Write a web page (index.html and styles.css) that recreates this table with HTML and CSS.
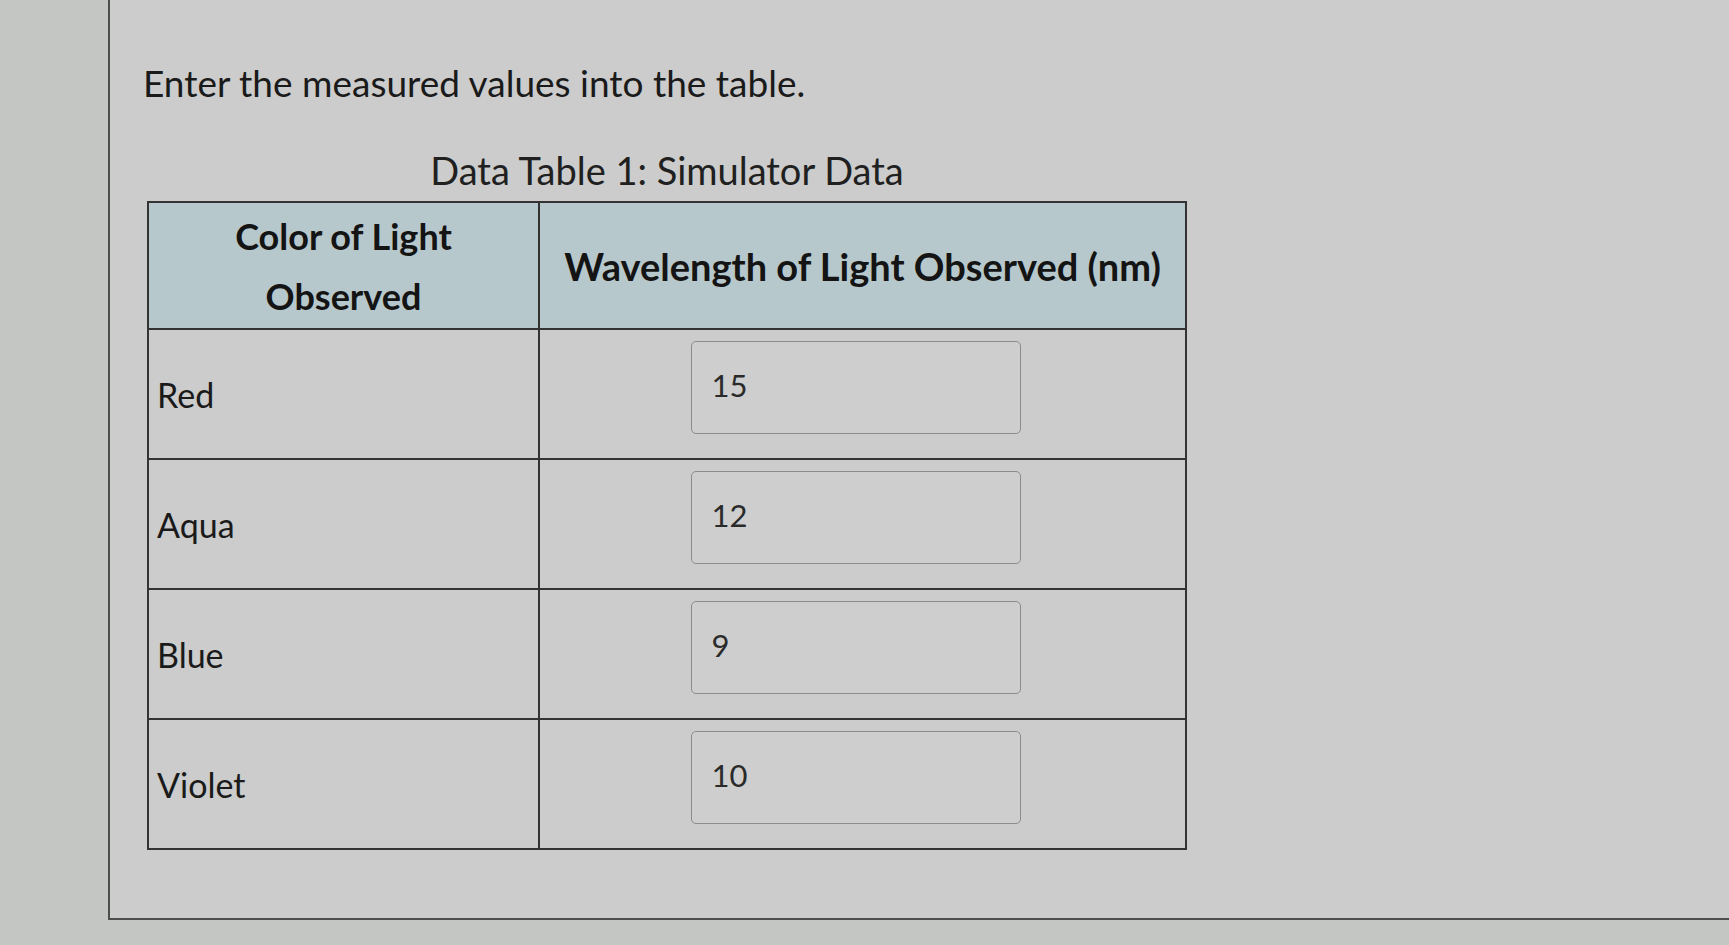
FILE: index.html
```html
<!DOCTYPE html>
<html lang="en">
<head>
<meta charset="utf-8">
<title>Data Table 1: Simulator Data</title>
<link rel="stylesheet" href="styles.css">
</head>
<body>
<div class="panel">
  <p class="intro">Enter the measured values into the table.</p>
  <table class="data-table">
    <caption>Data Table 1: Simulator Data</caption>
    <thead>
      <tr>
        <th class="col-color">Color of Light<br>Observed</th>
        <th class="col-wave">Wavelength of Light Observed (nm)</th>
      </tr>
    </thead>
    <tbody>
      <tr>
        <td class="name">Red</td>
        <td class="value"><input class="field" type="text" value="15"></td>
      </tr>
      <tr>
        <td class="name">Aqua</td>
        <td class="value"><input class="field" type="text" value="12"></td>
      </tr>
      <tr>
        <td class="name">Blue</td>
        <td class="value"><input class="field" type="text" value="9"></td>
      </tr>
      <tr>
        <td class="name">Violet</td>
        <td class="value"><input class="field" type="text" value="10"></td>
      </tr>
    </tbody>
  </table>
</div>
</body>
</html>
```
FILE: styles.css
```css
html, body {
  margin: 0;
  padding: 0;
}

body {
  background: #c4c6c3;
  font-family: Lato, "Open Sans", sans-serif;
  color: #1a1a1a;
  height: 945px;
  overflow: hidden;
}

.panel {
  margin-left: 108px;
  height: 920px;
  box-sizing: border-box;
  border-left: 2px solid #4d4d4d;
  border-bottom: 2px solid #4d4d4d;
  background: #cbcccb;
  padding: 61px 0 0 33px;
}

.intro {
  margin: 0;
  font-size: 37px;
  line-height: 44px;
  font-weight: 400;
}

.data-table {
  margin: 43px 0 0 4px;
  border-collapse: collapse;
  width: 1040px;
  table-layout: fixed;
}

.data-table caption {
  font-size: 38px;
  line-height: 44px;
  padding-bottom: 9px;
  color: #202020;
}

.data-table th,
.data-table td {
  border: 2px solid #333;
  padding: 0;
}

.data-table th {
  background: #b7c8cc;
  line-height: 60px;
  height: 125px;
  color: #141414;
  font-weight: 700;
}

.col-color {
  width: 389px;
  font-size: 36px;
}

.col-wave {
  font-size: 38px;
}

.data-table td {
  background: #cbcccb;
}

.name {
  font-size: 34px;
  padding-left: 8px !important;
  vertical-align: middle;
}

.value {
  vertical-align: top;
  text-align: center;
  height: 117px;
  padding-top: 11px !important;
}

.field {
  width: 330px;
  height: 93px;
  box-sizing: border-box;
  border: 1.5px solid #8c8c8c;
  border-radius: 5px;
  background: #cdcecd;
  font-family: Lato, "Open Sans", sans-serif;
  font-size: 31px;
  color: #2a2a2a;
  padding: 0 0 6px 20px;
  margin: 0 14px 0 0;
  outline: none;
}
```
